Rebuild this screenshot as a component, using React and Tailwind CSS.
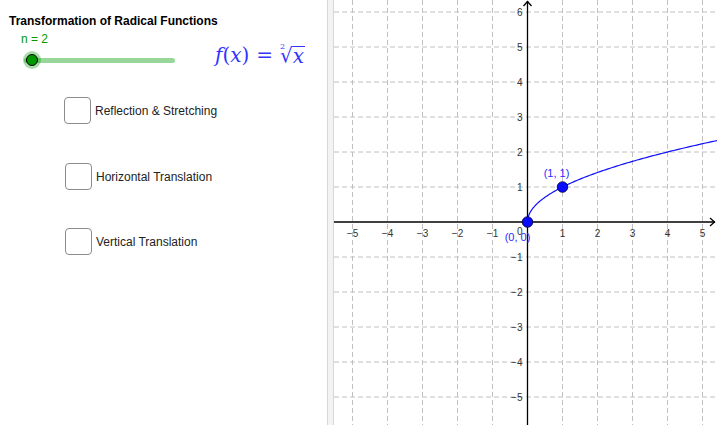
import React from 'react';

const OX = 193.5;
const OY = 222;
const U = 35;

function Checkbox({ label, left, top }) {
  return (
    <div className="flex items-center" style={{ paddingLeft: left, marginTop: top }}>
      <div className="w-[27px] h-[27px] rounded-[4px] border-[1.5px] border-[#8c8c8c] bg-white" />
      <span className="ml-[4px] text-[12px] leading-[14px] text-[#222]">{label}</span>
    </div>
  );
}

function Graph() {
  const xs = [-5, -4, -3, -2, -1, 1, 2, 3, 4, 5];
  const ys = [-5, -4, -3, -2, -1, 1, 2, 3, 4, 5, 6];
  const curve = [];
  for (let i = 0; i <= 120; i++) {
    const x = (i / 120) ** 2 * 5.45;
    curve.push(`${(OX + x * U).toFixed(2)},${(OY - Math.sqrt(x) * U).toFixed(2)}`);
  }
  return (
    <svg width="383" height="425" className="block">
      <g stroke="#c0c0c0" strokeWidth="1" strokeDasharray="5 3">
        {xs.map(k => (
          <line key={'v' + k} x1={OX + k * U} y1="0" x2={OX + k * U} y2="425" />
        ))}
        {ys.map(k => (
          <line key={'h' + k} x1="0" y1={OY - k * U} x2="383" y2={OY - k * U} />
        ))}
      </g>
      <g stroke="#000" strokeWidth="1.3" fill="none">
        <line x1={OX} y1="1" x2={OX} y2="425" />
        <line x1="0" y1={OY} x2="381" y2={OY} />
        <polyline points={`${OX - 4},6 ${OX},1.5 ${OX + 4},6`} />
        <polyline points={`376,${OY - 4} 380.5,${OY} 376,${OY + 4}`} />
      </g>
      <g fontFamily="'Liberation Sans', Arial, sans-serif" fontSize="10" fill="#333">
        {xs.map(k => (
          <text key={'tx' + k} x={OX + k * U} y={OY + 14.5} textAnchor="middle">
            {k < 0 ? '\u2212' + -k : k}
          </text>
        ))}
        {ys.map(k => (
          <text key={'ty' + k} x={OX - 5} y={OY - k * U + 3.5} textAnchor="end">
            {k < 0 ? '\u2212' + -k : k}
          </text>
        ))}
        <text x={OX - 5} y={OY + 12.5} textAnchor="end">0</text>
      </g>
      <polyline points={curve.join(' ')} fill="none" stroke="#1010ff" strokeWidth="1.2" />
      <g fill="#0a0aff" stroke="#000033" strokeWidth="0.8">
        <circle cx={OX} cy={OY} r="5.3" />
        <circle cx={OX + U} cy={OY - U} r="5.3" />
      </g>
      <g fontFamily="'Liberation Sans', Arial, sans-serif" fontSize="11" fill="#2a2aff">
        <text x={OX + U - 6} y={OY - U - 10.5} textAnchor="middle">(1, 1)</text>
        <text x={OX - 10} y={OY + 18.5} textAnchor="middle">(0, 0)</text>
      </g>
    </svg>
  );
}

export default function App() {
  return (
    <div className="w-[717px] h-[425px] flex bg-white overflow-hidden font-['Liberation_Sans',Arial,sans-serif]">
      {/* Left panel */}
      <div className="w-[327px] h-full">
        <div className="pt-[14px] pl-[9px] text-[12px] leading-[14px] font-bold text-black">
          Transformation of Radical Functions
        </div>
        <div className="pl-[21px] mt-[5px] text-[12px] leading-[13px] text-[#009900]">n = 2</div>
        <div className="flex items-center h-[20px] mt-[4px]">
          <div className="relative ml-[24px] w-[151px] h-[5px] rounded-full bg-[#99d699]">
            <div className="absolute left-[-1px] top-[-6.5px] w-[18px] h-[18px] rounded-full bg-[#00990055] flex items-center justify-center">
              <div className="w-[12px] h-[12px] rounded-full bg-[#009900] border border-black" />
            </div>
          </div>
          <div className="ml-[40px] mt-[-11px] flex items-end text-[20px] leading-[22px] text-[#3333ff] font-['DejaVu_Serif',serif] whitespace-nowrap">
            <span><i>f</i>(<i>x</i>)</span>
            <span className="mx-[7px]">=</span>
            <span className="relative inline-block">
              <span className="absolute left-[0px] top-[-1px] text-[8px] leading-[8px]">2</span>
              <span>√</span>
            </span>
            <i className="border-t border-[#3333ff] mt-[2px] leading-[19px] pr-[1px]">x</i>
          </div>
        </div>
        <Checkbox label="Reflection & Stretching" left={64} top={27} />
        <Checkbox label="Horizontal Translation" left={65} top={39} />
        <Checkbox label="Vertical Translation" left={65} top={38} />
      </div>
      {/* Divider */}
      <div className="w-[7px] h-full bg-[#f3f3f3] border-l border-r border-[#d8d8d8]" />
      {/* Graphics view */}
      <div className="flex-1 h-full">
        <Graph />
      </div>
    </div>
  );
}
